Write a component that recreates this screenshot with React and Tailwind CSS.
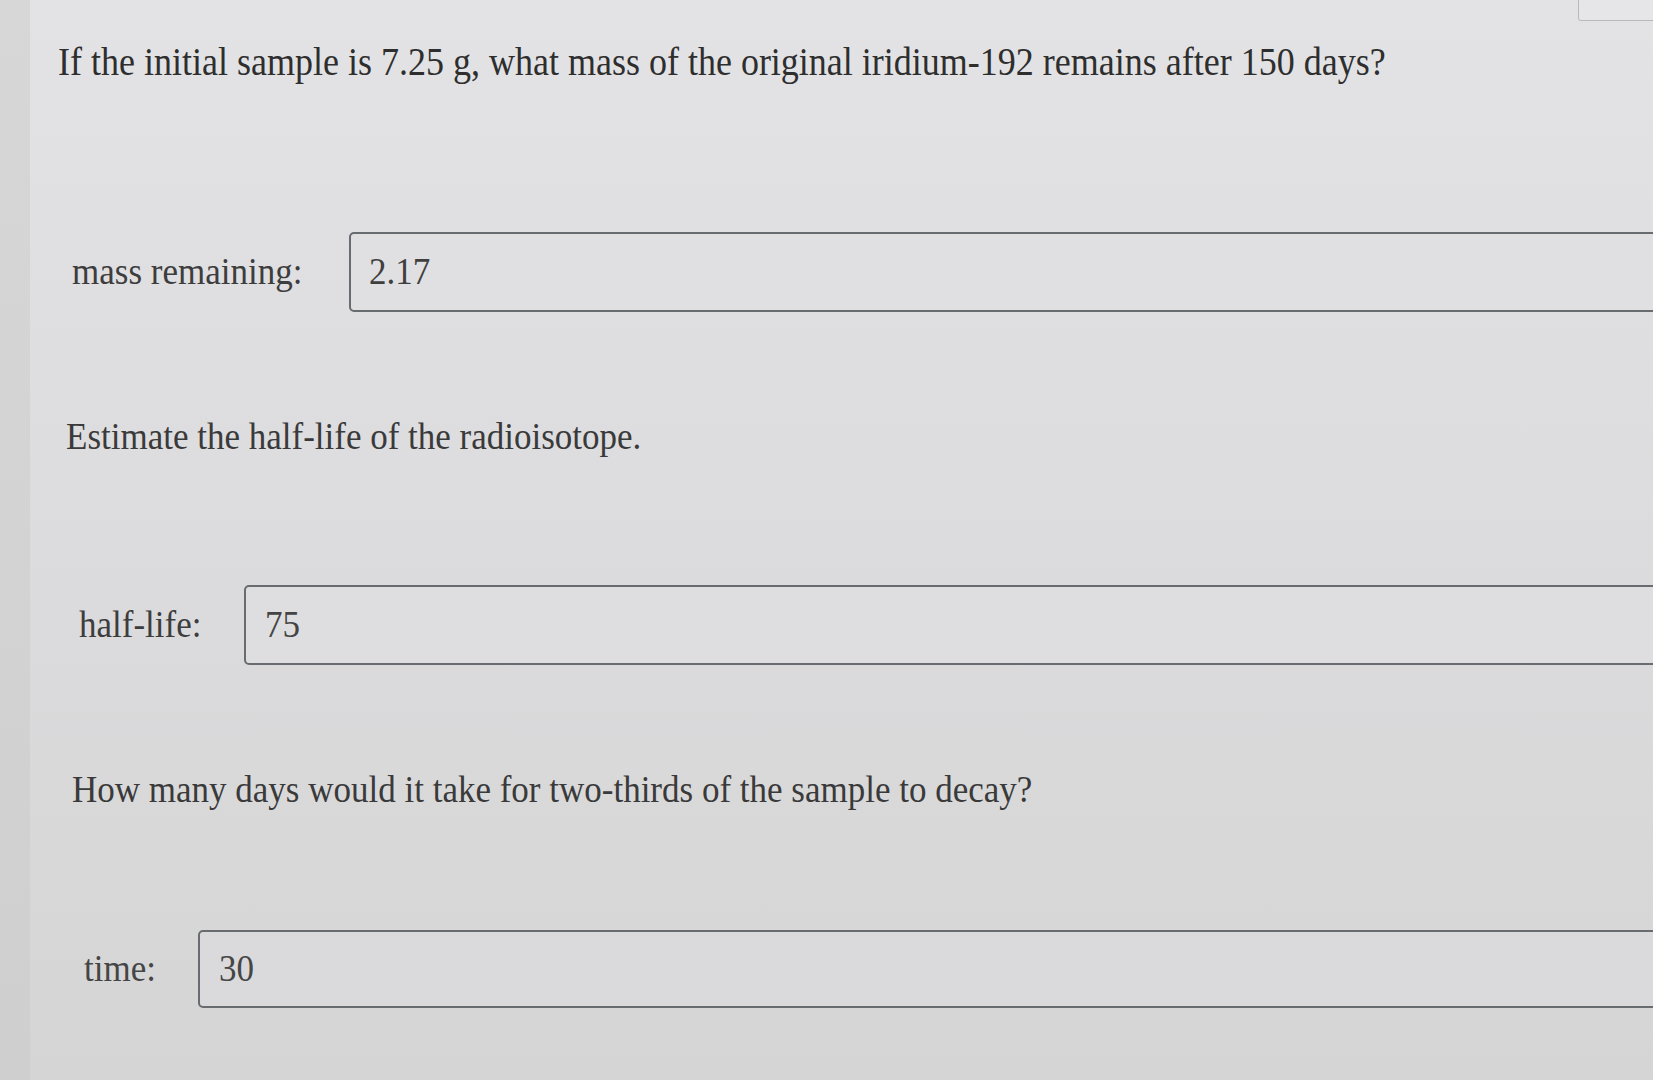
export default function App() {
  return (
    <div className="relative flex h-[1080px] w-[1653px] overflow-hidden bg-gradient-to-b from-[#e3e3e5] via-[#dcdcde] to-[#d5d5d5] [font-family:'Liberation_Serif','Times_New_Roman',serif] text-[#333]">
      <div className="w-[30px] shrink-0 bg-gradient-to-b from-[#d7d7d8] to-[#cfcfcf]" />
      <div className="absolute right-[-10px] top-[-6px] h-[27px] w-[85px] rounded-[3px] border border-[#b9b9bb] bg-[#e6e6e8]" />
      <div className="flex min-w-0 flex-1 flex-col">
        <p className="ml-[28px] mt-[42px] whitespace-nowrap text-[36px] leading-[40px] text-[#2e2e2e] origin-left scale-y-[1.1]">
          If the initial sample is 7.25 g, what mass of the original iridium-192 remains after 150 days?
        </p>

        <div className="mt-[150px] flex items-center">
          <span className="ml-[42px] w-[277px] shrink-0 text-[35px] leading-[40px] text-[#3d3d3d] scale-y-[1.1] origin-left">mass remaining:</span>
          <div className="-mr-[20px] flex h-[80px] flex-1 items-center rounded-[5px] border-2 border-[#686c70] bg-[#e0e0e2] pl-[18px]">
            <span className="text-[35px] leading-[40px] text-[#3f3f3f] scale-y-[1.1]">2.17</span>
          </div>
        </div>

        <p className="ml-[36px] mt-[105px] text-[35px] leading-[40px] text-[#3a3a3a] origin-left scale-y-[1.1]">
          Estimate the half-life of the radioisotope.
        </p>

        <div className="mt-[128px] flex items-center">
          <span className="ml-[49px] w-[165px] shrink-0 text-[35px] leading-[40px] text-[#3d3d3d] scale-y-[1.1] origin-left">half-life:</span>
          <div className="-mr-[20px] flex h-[80px] flex-1 items-center rounded-[5px] border-2 border-[#686c70] bg-[#dedee0] pl-[19px]">
            <span className="text-[35px] leading-[40px] text-[#444] scale-y-[1.1]">75</span>
          </div>
        </div>

        <p className="ml-[42px] mt-[105px] text-[35px] leading-[40px] text-[#3a3a3a] origin-left scale-y-[1.1]">
          How many days would it take for two-thirds of the sample to decay?
        </p>

        <div className="mt-[120px] flex items-center">
          <span className="ml-[54px] w-[114px] shrink-0 text-[35px] leading-[40px] text-[#454545] scale-y-[1.1] origin-left">time:</span>
          <div className="-mr-[20px] flex h-[78px] flex-1 items-center rounded-[5px] border-2 border-[#686c70] bg-[#dadadc] pl-[19px]">
            <span className="text-[35px] leading-[40px] text-[#464646] scale-y-[1.1]">30</span>
          </div>
        </div>
      </div>
    </div>
  );
}
